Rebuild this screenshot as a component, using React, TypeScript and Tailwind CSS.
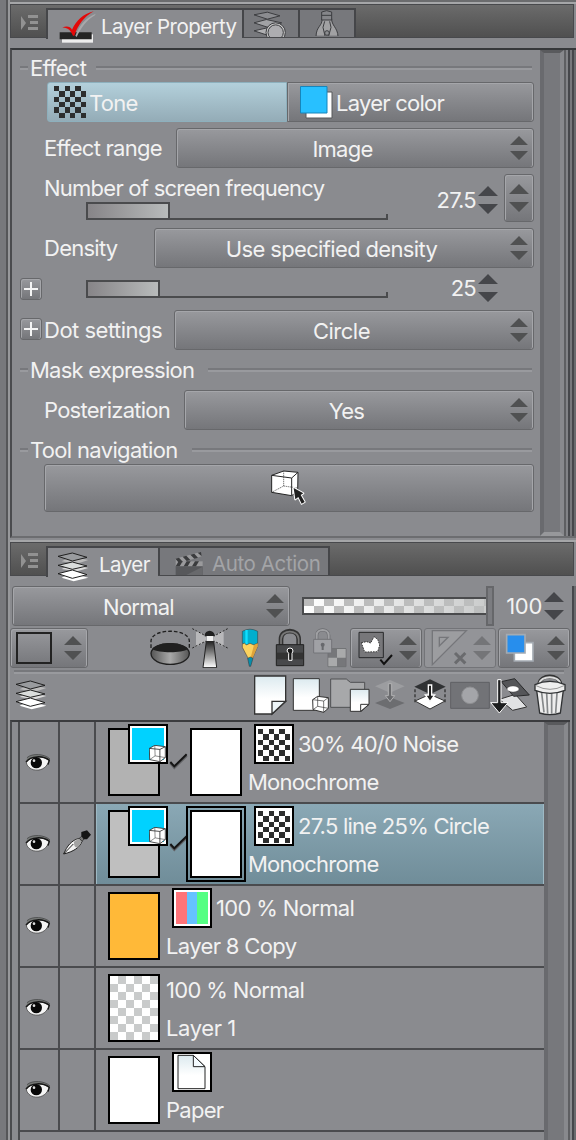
import React from 'react';
import { clsx } from 'clsx';

const buttonFace =
  'box-border border border-[#67686b] rounded-[3px] bg-linear-to-b from-[#98999d] to-[#75767a] shadow-[inset_1px_1px_0_#a5a6aa,inset_-1px_0_0_#a5a6aa]';

function Arrows({ large, className }: { large?: boolean; className?: string }) {
  if (large) {
    return (
      <svg className={clsx('shrink-0', className)} width="20" height="28" viewBox="0 0 20 28" fill="#45464a">
        <path d="M10 0 20 10H0ZM0 18H20L10 28Z" />
      </svg>
    );
  }
  return (
    <svg className={clsx('shrink-0', className)} width="18" height="24" viewBox="0 0 18 24" fill="#505152">
      <path d="M9 0 18 9H0ZM0 15H18L9 24Z" />
    </svg>
  );
}

function Select({ label, className, textClass }: { label: string; className: string; textClass?: string }) {
  return (
    <button className={clsx(buttonFace, 'flex h-10 shrink-0 items-center pr-[5px]', className)}>
      <span className={clsx('flex-1 pt-px pr-0.5 text-center', textClass)}>{label}</span>
      <Arrows />
    </button>
  );
}

function Heading({ label, className, textClass }: { label: string; className?: string; textClass: string }) {
  return (
    <div className={clsx('flex h-7 items-center', className)}>
      <div className="mr-0.5 h-1 w-2 border-t-2 border-b-2 border-t-[#77787c] border-b-[#999a9e]" />
      <span className={clsx('shrink-0', textClass)}>{label}</span>
      <div className="mr-2 h-1 flex-1 border-t-2 border-b-2 border-t-[#77787c] border-b-[#999a9e]" />
    </div>
  );
}

function PlusBox() {
  return (
    <button className={clsx(buttonFace, 'flex h-[22px] w-[22px] shrink-0 items-center justify-center')}>
      <svg width="14" height="14" viewBox="0 0 14 14" stroke="#f4f4f4" strokeWidth="2">
        <path d="M7 0V14M0 7H14" />
      </svg>
    </button>
  );
}

function Slider({ fill }: { fill: number }) {
  return (
    <div className="flex h-[18px] w-[302px] items-end">
      <div
        className="box-border h-[18px] shrink-0 border-2 border-[#4a4b4d] bg-linear-to-r from-[#878588] to-[#b8bbbb]"
        style={{ width: fill }}
      />
      <div className="h-1.5 flex-1 border-r-2 border-b-2 border-[#4a4b4d]" />
    </div>
  );
}

function MenuIcon() {
  return (
    <svg width="17" height="16" viewBox="0 0 17 16" fill="#929292">
      <path d="M0 1 5 8 0 15ZM7 0H17V3H7ZM9 6H17V9H9ZM7 12H17V15H7Z" />
    </svg>
  );
}

function Checker() {
  const cells: React.ReactNode[] = [];
  for (let r = 0; r < 6; r++) {
    for (let c = 0; c < 6; c++) {
      if ((r + c) % 2 === 0) cells.push(<rect key={`${r}-${c}`} x={c * 5.33} y={r * 5.33} width="5.33" height="5.33" />);
    }
  }
  return (
    <svg width="32" height="32" viewBox="0 0 32 32" fill="#2d2e2e" shapeRendering="crispEdges">
      {cells}
    </svg>
  );
}

function Cube({ className, size = 17 }: { className?: string; size?: number }) {
  return (
    <svg className={className} width={size} height={size} viewBox="0 0 50 50" fill="none" stroke="#303030" strokeWidth="2.5">
      <path d="M1 10 17 1 48 5V37L32 49 2 43Z" fill="#fff" />
      <path d="M1 10 32 13 48 5M32 13V49" />
      <path d="M17 1 18 32 2 43M18 32 48 37" strokeWidth="1.6" />
    </svg>
  );
}

function StackIcon() {
  return (
    <svg width="32" height="30" viewBox="0 0 96 90">
      <path d="M42 14 94 24 60 35 14 28Z" fill="#bbb" />
      <path d="M3 13 46 3 90 16 46 27Z" fill="#999b9e" stroke="#202020" strokeWidth="3" />
      <path d="M42 37 94 48 60 58 14 51Z" fill="#ddd" />
      <path d="M3 40 46 30 90 42 46 52Z" fill="#dadddc" stroke="#202020" strokeWidth="3" />
      <path d="M42 63 94 77 50 88 14 77Z" fill="#fff" />
      <path d="M3 65 46 54 90 68 46 79Z" fill="#fff" stroke="#202020" strokeWidth="3" />
    </svg>
  );
}

function RedCheckIcon() {
  return (
    <svg width="38" height="34" viewBox="170 32 114 102">
      <path d="M182 105H275V130H182Z" fill="#eee" />
      <path d="M175 99H271V120H175Z" fill="#242424" />
      <path d="M222 109C236 75 252 57 283 43L281 48C255 63 241 83 226 113Z" fill="#a8a8aa" />
      <path d="M183 85C194 79 207 80 212 91C225 64 245 44 277 36C248 53 231 75 219 109H215C206 89 198 84 183 85Z" fill="#e40808" />
    </svg>
  );
}

function LayerSearchIcon() {
  return (
    <svg width="34" height="27" viewBox="760 30 102 78" stroke="#3c3d40" strokeWidth="3">
      <path d="M763 91 803 82 837 92 803 104Z" fill="#b0b0b2" />
      <path d="M763 67 800 57 846 67 803 80Z" fill="#a1a2a5" />
      <path d="M763 43 803 35 841 46 803 56Z" fill="#8b8c90" />
      <circle cx="828" cy="96" r="29" fill="#c9c9c9" />
      <circle cx="828" cy="96" r="23" fill="#adadb0" />
    </svg>
  );
}

function BulbIcon() {
  return (
    <svg width="24" height="26" viewBox="950 30 72 78" fill="#a1a1a3" stroke="#3c3d40" strokeWidth="3">
      <path d="M971 56C973 78 954 78 953 109H1019C1018 83 999 76 1000 56Z" />
      <path d="M970 36Q985 28 1000 36V60H970Z" fill="#85868a" />
      <path d="M970 46H1000M980 108 974 82 979 64M991 108 998 82 994 64" fill="none" />
      <circle cx="986" cy="99" r="7" fill="#8c8d90" />
    </svg>
  );
}

function ClapIcon() {
  return (
    <svg width="30" height="24" viewBox="522 602 90 72">
      <path d="M526 625 601 605 605 618 530 642Z" fill="#9a9a9c" />
      <path d="M527 633H608V648H527Z" fill="#9a9a9c" />
      <path d="M527 648H608V676H527Z" fill="#57585b" />
      <path d="M526 625 537 622 549 635 538 639ZM548 619 559 616 571 629 560 632ZM571 613 583 610 594 622 583 625ZM593 607 603 605 605 618ZM536 633H548L539 648H527ZM560 633H572L563 648H551ZM585 633H597L588 648H576Z" fill="#3a3b3d" />
      <path d="M555 676 608 649V676Z" fill="#68696c" />
    </svg>
  );
}

function TabBar({ children }: { children: React.ReactNode }) {
  return (
    <div className="mr-0.5 box-border flex h-[34px] shrink-0 border border-[#48494c] bg-linear-to-b from-[#6b6b6b] to-[#505050] pt-[3px]">
      <div className="flex w-[35px] shrink-0 justify-center pt-[7px] pl-0.5">
        <MenuIcon />
      </div>
      {children}
    </div>
  );
}

const activeTab =
  'box-border flex h-[31px] shrink-0 border-t-2 border-l-2 border-[#454649] bg-[#8a8b8f] text-[20.5px] tracking-[-0.55px] shadow-[0_1px_0_#8a8b8f]';
const idleTab =
  'box-border flex h-[29px] shrink-0 overflow-hidden border-2 border-b-0 border-[#454649] bg-[#77787c] text-[20.5px] tracking-[-0.4px]';

function ScrollTrack({ className, closed }: { className?: string; closed?: boolean }) {
  return (
    <div
      className={clsx(
        'box-border shrink-0 border-t-[3px] border-r-[4px] border-l-[4px] border-t-[#595a5d] border-r-[#88898d] border-l-[#696a6e] bg-[#77787c]',
        closed && 'border-b-[4px] border-b-[#97989b]',
        className
      )}
    />
  );
}

function PropertyPanel() {
  return (
    <section className="flex h-[540px] flex-col">
      <div className="h-1 shrink-0 border-b-2 border-[#a5a6a8] bg-[#6b6c6e]" />
      <TabBar>
        <div className={clsx(activeTab, 'w-[196px] pl-2.5')}>
          <RedCheckIcon />
          <span className="ml-[5px] pt-[3px]">Layer Property</span>
        </div>
        <div className={clsx(idleTab, 'w-[56px] border-r-0 pl-[9px]')}>
          <LayerSearchIcon />
        </div>
        <div className={clsx(idleTab, 'w-[58px] justify-center')}>
          <BulbIcon />
        </div>
      </TabBar>
      <div className="mt-2.5 box-border flex h-[490px] border-t-2 border-b-2 border-l-2 border-[#4a4b4e] border-t-[#36383a] border-b-[#6c6d70]">
        <div className="flex w-[528px] flex-col pl-2">
          <Heading label="Effect" className="mt-1" textClass="w-[66px]" />
          <div className="ml-[27px] flex h-10">
            <button className="box-border flex w-[240px] shrink-0 items-center rounded-l-[3px] border border-[#8db0bd] bg-linear-to-b from-[#b3d0db] to-[#94acb7] pl-[6px]">
              <Checker />
              <span className="pt-px pl-[3px]">Tone</span>
            </button>
            <button className={clsx(buttonFace, 'flex w-[247px] shrink-0 items-center rounded-l-none pl-3')}>
              <svg width="33" height="33" viewBox="0 0 33 33">
                <path d="M6 6H32V32H6Z" fill="#fff" stroke="#56585a" />
                <path d="M.5.5H27V27H.5Z" fill="#28c0ff" stroke="#1685bb" />
              </svg>
              <span className="pt-px pl-[3px]">Layer color</span>
            </button>
          </div>
          <div className="mt-1.5 flex items-center pl-6">
            <span className="w-[132px] shrink-0">Effect range</span>
            <Select label="Image" className="w-[358px]" />
          </div>
          <div className="mt-1.5 flex h-12 pl-6">
            <div className="w-[390px]">
              <div className="h-7 leading-7">Number of screen frequency</div>
              <div className="ml-[42px]">
                <Slider fill={84} />
              </div>
            </div>
            <div className="flex w-[42px] items-center justify-end pt-1">27.5</div>
            <Arrows large className="mt-3 ml-[2px]" />
            <button className={clsx(buttonFace, 'ml-1.5 flex h-12 w-[30px] items-center justify-center')}>
              <Arrows large className="fill-[#505152]" />
            </button>
          </div>
          <div className="mt-1.5 flex items-center pl-6">
            <span className="w-[110px] shrink-0">Density</span>
            <Select label="Use specified density" className="w-[380px]" textClass="tracking-[-0.65px]" />
          </div>
          <div className="mt-1.5 flex h-[28px] items-start">
            <div className="mt-1">
              <PlusBox />
            </div>
            <div className="mt-1.5 ml-11">
              <Slider fill={74} />
            </div>
            <span className="w-[88px] text-right leading-[28px]">25</span>
            <Arrows large className="ml-[2px]" />
          </div>
          <div className="mt-2 flex items-center">
            <div className="-mt-0.5">
              <PlusBox />
            </div>
            <span className="ml-0.5 w-[130px] shrink-0 tracking-[-0.5px]">Dot settings</span>
            <Select label="Circle" className="w-[360px]" textClass="tracking-[-0.5px]" />
          </div>
          <Heading label="Mask expression" className="mt-1.5" textClass="w-[178px]" />
          <div className="mt-1.5 flex items-center pl-6">
            <span className="w-[140px] shrink-0">Posterization</span>
            <Select label="Yes" className="w-[350px]" />
          </div>
          <Heading label="Tool navigation" className="mt-1.5" textClass="w-[162px] tracking-[-0.67px]" />
          <button className={clsx(buttonFace, 'ml-6 flex h-12 w-[490px] items-start pt-[5px] pl-[225px]')}>
            <svg width="38" height="38" viewBox="808 363 114 114" fill="none" stroke="#242424" strokeWidth="3">
              <path d="M813 379 849 366 892 370 891 427 873 440 813 430Z" fill="#fff" />
              <path d="M813 379 873 387 892 370M873 387V440" />
              <path d="M849 366V411L813 430M849 411 891 417" strokeWidth="1.8" strokeDasharray="4 2" />
              <path d="M879 417 908 433 900 438 912 459 903 464 893 444 884 451Z" fill="#202020" stroke="#fff" strokeWidth="6" strokeLinejoin="round" />
              <path d="M879 417 908 433 900 438 912 459 903 464 893 444 884 451Z" fill="#202020" stroke="none" />
            </svg>
          </button>
        </div>
        <ScrollTrack className="h-[486px] w-6" closed />
        <div className="h-full w-0.5 bg-[#5e5f62]" />
        <div className="h-full w-2.5 bg-[linear-gradient(to_right,#828387_2px,#46474b_2px,#46474b_4px,#77787c_4px,#77787c_6px,#46474b_6px,#46474b_8px,#6a6b6e_8px)]" />
      </div>
    </section>
  );
}

function BlendRow() {
  return (
    <div className="flex h-10 items-center pl-0.5">
      <Select label="Normal" className="w-[278px]" />
      <div className="ml-3 box-border h-[18px] w-[184px] shrink-0 border-2 border-r-0 border-[#4a4b4d] bg-[linear-gradient(to_right,transparent,#bdbfbfcc),conic-gradient(#fff_25%,#bbb_0_50%,#fff_0_75%,#bbb_0)] bg-size-[100%_100%,20px_14px]" />
      <div className="box-border h-10 w-2 shrink-0 border-2 border-[#66676a] bg-[#7b7c80]" />
      <span className="w-[48px] shrink-0 text-right tracking-[-0.3px]">100</span>
      <Arrows large className="ml-0.5" />
    </div>
  );
}

function ModeRow() {
  return (
    <div className="mt-0.5 flex h-10 items-start">
      <button className={clsx(buttonFace, 'flex h-10 w-[78px] shrink-0 items-center pl-[5px]')}>
        <div className="box-border h-8 w-9 border-2 border-[#222]" />
        <Arrows className="ml-3" />
      </button>
      <svg className="ml-[61px] shrink-0" width="42" height="40" viewBox="447 144 126 120">
        <defs>
          <linearGradient id="rim">
            <stop stopColor="#555" />
            <stop offset="0.5" stopColor="#a9a9a9" />
            <stop offset="1" stopColor="#555" />
          </linearGradient>
        </defs>
        <path d="M453 220C455 181 566 181 568 220C567 264 454 264 453 220Z" fill="url(#rim)" stroke="#202020" strokeWidth="4" />
        <path d="M456 207C478 183 542 183 564 207C545 220 477 220 456 207Z" fill="#202020" />
        <path d="M453 204V183C455 144 566 144 568 183V204" fill="none" stroke="#202020" strokeWidth="4" strokeDasharray="11 6" />
      </svg>
      <svg className="shrink-0" width="38" height="40" viewBox="573 144 114 120">
        <defs>
          <linearGradient id="tower" x2="0" y2="1">
            <stop stopColor="#222" />
            <stop offset="1" stopColor="#fff" />
          </linearGradient>
        </defs>
        <path d="M588 151 618 168V183L588 201ZM671 151 642 168V183L671 201Z" fill="#b8b8ba" />
        <path d="M577 146 618 168M577 204 618 183M683 146 642 168M683 204 642 183" stroke="#252525" strokeWidth="3" strokeDasharray="6 5" />
        <path d="M619 184H641L650 263H609Z" fill="url(#tower)" stroke="#222" strokeWidth="3" />
        <path d="M614 165Q616 153 629 152Q641 153 644 165V169H614Z" fill="#202020" />
        <path d="M620 168H640V183H620Z" fill="#eee" />
      </svg>
      <svg className="ml-3 shrink-0" width="18" height="40" viewBox="723 144 54 120" stroke="#333" strokeWidth="1.5">
        <path d="M727 154Q750 141 773 154V190L752 200 727 190Z" fill="#00aece" />
        <path d="M736 150H743V193H736Z" fill="#10e0ff" stroke="none" />
        <path d="M727 193 733 189 739 195 750 190 762 195 773 190V199L757 236H745L727 202Z" fill="#fbd25f" />
        <path d="M762 195 773 190V199L757 236H751Z" fill="#dfa43a" stroke="none" />
        <path d="M743 235 751 231 759 235 752 259H748Z" fill="#078eac" />
      </svg>
      <svg className="ml-4 shrink-0" width="30" height="40" viewBox="825 144 90 120">
        <path d="M843 196V178C843 145 896 145 896 178V196" fill="none" stroke="#333" strokeWidth="14" />
        <path d="M843 194V178C843 147 896 147 896 178V194" fill="none" stroke="#777" strokeWidth="5" />
        <path d="M829 194H911V257H829Z" fill="#48494b" stroke="#222" strokeWidth="3" />
        <path d="M831 218H909V238H831Z" fill="#333" />
        <path d="M861 213A9 9 0 1 1 879 213L876 220V241H866V220Z" fill="#151515" stroke="#fff" strokeWidth="3" />
      </svg>
      <svg className="ml-[7px] shrink-0" width="36" height="40" viewBox="66 144 108 120">
        <path d="M80 180V166C80 144 116 144 116 166V180" fill="none" stroke="#6b6c70" strokeWidth="10" />
        <path d="M80 180V166C80 145 116 145 116 166V180" fill="none" stroke="#a0a1a4" strokeWidth="6" />
        <path d="M114 206H168V260H114Z" fill="#76777a" stroke="#707174" strokeWidth="3" />
        <path d="M141 207H167V233H141ZM115 233H141V259H115Z" fill="#a9aaab" />
        <path d="M71 178H125V219H71Z" fill="#a0a1a5" stroke="#737478" strokeWidth="3" />
        <circle cx="98" cy="194" r="6" fill="#68696d" />
        <path d="M95 194H101V210H95Z" fill="#68696d" />
      </svg>
      <button className={clsx(buttonFace, 'ml-0.5 flex h-10 w-[72px] shrink-0 items-center')}>
        <svg className="shrink-0" width="44" height="38" viewBox="184 147 132 114">
          <path d="M208 157H281V233H208Z" fill="#77777a" stroke="#27282a" strokeWidth="3" />
          <path d="M215 188 231 185 243 189 253 170 264 178 270 195 264 215 225 216Z" fill="#fff" stroke="#222" strokeWidth="2.5" strokeDasharray="5 3" />
          <path d="M272 239 283 252 307 225" fill="none" stroke="#111" strokeWidth="6" />
        </svg>
        <Arrows className="ml-1" />
      </button>
      <button className="ml-0.5 box-border flex h-10 w-[72px] shrink-0 items-center rounded-[3px] border border-[#737478] bg-[#939498]">
        <svg className="shrink-0" width="44" height="38" viewBox="406 147 132 114" fill="none" stroke="#75767a" strokeWidth="4">
          <path d="M428 152H530L428 254Z" fill="#9c9da0" />
          <path d="M449 172H475L449 198Z" />
          <path d="M496 219 527 250M527 219 496 250" strokeWidth="9" stroke="#6a6b6e" />
        </svg>
        <Arrows className="ml-1 opacity-45" />
      </button>
      <button className={clsx(buttonFace, 'ml-0.5 flex h-10 w-[72px] shrink-0 items-center')}>
        <svg className="shrink-0" width="44" height="38" viewBox="628 147 132 114" stroke="#a4abb2" strokeWidth="5">
          <path d="M674 188H730V243H674Z" fill="#fff" />
          <path d="M651 164H706V219H651Z" fill="#278eed" />
        </svg>
        <Arrows className="ml-1" />
      </button>
    </div>
  );
}

function CommandRow() {
  return (
    <div className="flex h-[46px] items-start pl-[5px]">
      <div className="mt-1.5">
        <StackIcon />
      </div>
      <svg className="ml-[206px] shrink-0" width="36" height="42" viewBox="759 279 108 126">
        <defs>
          <linearGradient id="sheet" x2="0" y2="1">
            <stop stopColor="#dceaef" />
            <stop offset="0.6" stopColor="#fff" />
          </linearGradient>
        </defs>
        <path d="M764 285H857V361L816 399H764Z" fill="url(#sheet)" stroke="#333" strokeWidth="4" />
        <path d="M857 361H816V399Z" fill="#eef6f9" stroke="#333" strokeWidth="4" />
      </svg>
      <svg className="ml-[3px] shrink-0" width="38" height="42" viewBox="6 279 114 126" stroke="#333" strokeWidth="3">
        <path d="M10 293H88V388H10Z" fill="url(#sheet)" />
        <path d="M68 356 83 346 115 350V382L101 394 69 386Z" fill="#fff" />
        <path d="M68 356 101 360 115 350M101 360V394M83 346V376L69 386M83 376 115 382" fill="none" strokeWidth="2" />
      </svg>
      <svg className="shrink-0" width="40" height="42" viewBox="120 279 120 126" stroke="#333" strokeWidth="3">
        <path d="M122 294H169L181 304H224V379H122Z" fill="#a7a8aa" stroke="#505153" />
        <path d="M181 325H237V370L214 391H181Z" fill="url(#sheet)" />
        <path d="M237 370H212V391Z" fill="#fff" />
      </svg>
      <svg className="ml-1 shrink-0" width="32" height="42" viewBox="252 279 96 126">
        <path d="M255 366 300 349 344 366 300 384Z" fill="#6c6d70" />
        <path d="M255 316 300 297 344 316 300 335Z" fill="#9c9da0" />
        <path d="M295 308H305V344H314L300 362 286 344H295Z" fill="#6a6b6e" stroke="#b2b2b4" strokeWidth="3" />
      </svg>
      <svg className="ml-[6px] shrink-0" width="36" height="42" viewBox="366 279 108 126">
        <path d="M375 325V364M465 325V364" stroke="#333" strokeWidth="4" strokeDasharray="9 6" />
        <path d="M375 360 420 340 465 360 420 384Z" fill="#fff" stroke="#333" strokeWidth="3" />
        <path d="M373 317 420 295 467 317 420 340Z" fill="#303234" />
        <path d="M415 312H425V342H434L420 362 406 342H415Z" fill="#222" stroke="#fff" strokeWidth="4" />
      </svg>
      <svg className="ml-0.5 shrink-0" width="40" height="42" viewBox="480 279 120 126">
        <path d="M482 304H598V382H482Z" fill="#727377" stroke="#606164" strokeWidth="3" />
        <circle cx="540" cy="343" r="25" fill="#a4a5a9" stroke="#8e8f92" strokeWidth="3" />
      </svg>
      <svg className="shrink-0" width="40" height="42" viewBox="600 279 120 126">
        <path d="M628 355 676 340 710 378 668 388Z" fill="#e1e2e3" stroke="#333" strokeWidth="3" />
        <path d="M634 302 674 293 718 342 671 346Z" fill="#555659" stroke="#292a2b" strokeWidth="3" />
        <ellipse cx="669" cy="324" rx="18" ry="9" fill="#fff" stroke="#333" />
        <path d="M623 296H633V365H654L628 396 602 365H623Z" fill="#1c1d1e" stroke="#fff" strokeWidth="3" />
      </svg>
      <svg className="ml-[3px] shrink-0" width="34" height="42" viewBox="730 279 102 126">
        <path d="M749 309C752 279 808 279 812 309" fill="none" stroke="#333" strokeWidth="12" />
        <path d="M749 309C752 282 808 282 812 309" fill="none" stroke="#ddd" strokeWidth="6" />
        <path d="M741 328 750 396Q781 406 812 396L821 328Z" fill="#eee" stroke="#303234" strokeWidth="4" />
        <path d="M756 336 763 394M771 336 774 398M786 336 786 398M802 336 798 396" stroke="#85888a" strokeWidth="5" />
        <path d="M736 311Q781 291 826 311V328Q781 346 736 328Z" fill="#eee" stroke="#303234" strokeWidth="4" />
        <path d="M739 314Q781 336 823 314" fill="none" stroke="#999" strokeWidth="3" />
      </svg>
    </div>
  );
}

function EyeIcon() {
  return (
    <svg width="26" height="18" viewBox="77 114 78 54">
      <path d="M81 143C91 122 131 120 149 137C138 176 87 172 81 143Z" fill="#f4f4f4" stroke="#444" strokeWidth="2.5" />
      <path d="M83 128C98 114 136 116 152 132L149 137C131 120 94 122 81 141Z" fill="#777a78" />
      <path d="M80 141C94 121 132 121 150 136L146 149" fill="none" stroke="#171717" strokeWidth="4" />
      <path d="M83 128C98 114 136 116 152 132" fill="none" stroke="#48494b" strokeWidth="2.5" />
      <circle cx="111" cy="143" r="17" fill="#080808" />
      <circle cx="104" cy="137" r="4" fill="#ddd" />
    </svg>
  );
}

function PenIcon() {
  return (
    <svg width="28" height="25" viewBox="191 344 84 75">
      <path d="M193 416C203 392 217 374 240 369L248 378C241 397 222 409 193 416Z" fill="#f2f2f2" stroke="#222" strokeWidth="3" />
      <path d="M224 379 240 369 248 378 236 396Q223 399 224 379Z" fill="#a2a2a2" />
      <path d="M193 416 222 386" stroke="#222" strokeWidth="3" />
      <path d="M240 369 248 362 255 370 248 378Z" fill="#777" stroke="#222" strokeWidth="2" />
      <path d="M246 350 263 345 275 358 263 372H253L246 362Z" fill="#151515" />
    </svg>
  );
}

function Thumb({ className }: { className?: string }) {
  return <div className={clsx('mt-1.5 box-border h-[68px] w-[52px] shrink-0 border-2 border-black', className)} />;
}

const badge = 'box-border h-10 w-10 shrink-0 border-2 border-black bg-white';

function MaskedLayer({ title, thumb, selected }: { title: string; thumb: string; selected?: boolean }) {
  return (
    <>
      <div className="relative">
        <Thumb className={thumb} />
        <div className={clsx(badge, 'absolute top-0.5 left-5 p-0.5')}>
          <div className="h-8 w-8 bg-[#00d2ff]" />
          <Cube className="absolute right-0 bottom-0" />
        </div>
      </div>
      <svg className="mt-[31px] ml-[9px] shrink-0" width="21" height="20" viewBox="507 117 63 60" fill="none">
        <path d="M511 147 523 161 560 125" stroke="#606164" strokeWidth="8" />
        <path d="M511 144 523 157 560 121" stroke="#151515" strokeWidth="6" />
      </svg>
      <Thumb className={clsx('bg-white', selected && 'outline-2 outline-offset-2 outline-black')} />
      <div className="flex flex-col pl-1.5">
        <div className="flex h-[42px] items-center pt-0.5 pl-1.5">
          <div className={clsx(badge, 'p-[3px] pl-0.5')}>
            <Checker />
          </div>
          <span className="ml-1">{title}</span>
        </div>
        <span className="mt-0.5 leading-8">Monochrome</span>
      </div>
    </>
  );
}

function LayerRow({ selected, children }: { selected?: boolean; children: React.ReactNode }) {
  return (
    <div className="group box-border flex h-[82px] shrink-0 border-b-2 border-[#4a4b4e]">
      <div className="flex w-[38px] shrink-0 items-center pb-[3px] pl-[5px] group-first:pb-0">
        <EyeIcon />
      </div>
      <div className="box-border flex w-[38px] shrink-0 items-center justify-end border-x-2 border-[#4a4b4e] pr-[3px] pb-[3px]">
        {selected && <PenIcon />}
      </div>
      <div
        className={clsx(
          'flex flex-1 pl-3',
          selected && 'bg-linear-to-b from-[#8aa8b5] to-[#708d99] shadow-[inset_1px_0_0_#9eb9c4,inset_-1px_0_0_#9eb9c4]'
        )}
      >
        {children}
      </div>
    </div>
  );
}

function LayerList() {
  return (
    <div className="box-border flex h-[420px] w-[560px] shrink-0 border-t-2 border-l-2 border-[#4a4b4e] border-t-[#3b3c3f]">
      <div className="ml-1.5 box-border flex w-[526px] shrink-0 flex-col border-l-2 border-[#4a4b4e]">
        <LayerRow>
          <MaskedLayer title="30% 40/0 Noise" thumb="bg-[#b2b2b2]" />
        </LayerRow>
        <LayerRow selected>
          <MaskedLayer title="27.5 line 25% Circle" thumb="bg-[#bfbfbf]" selected />
        </LayerRow>
        <LayerRow>
          <Thumb className="bg-[#ffb938]" />
          <div className="flex flex-col pl-1.5">
            <div className="flex h-[42px] items-center pt-0.5 pl-1.5">
              <div className={clsx(badge, 'flex p-0.5')}>
                <div className="w-[11px] bg-[#ff7479]" />
                <div className="w-[11px] bg-[#65c2ff]" />
                <div className="w-[11px] bg-[#54ff83]" />
              </div>
              <span className="ml-1 tracking-[-0.65px]">100 % Normal</span>
            </div>
            <span className="mt-0.5 leading-8 tracking-[-0.65px]">Layer 8 Copy</span>
          </div>
        </LayerRow>
        <LayerRow>
          <Thumb className="bg-[conic-gradient(#c9cbcb_25%,#fff_0_50%,#c9cbcb_0_75%,#fff_0)] bg-size-[16px_16px]" />
          <div className="flex flex-col pl-1.5">
            <span className="h-[42px] leading-[44px] tracking-[-0.65px]">100 % Normal</span>
            <span className="mt-0.5 leading-8 tracking-[-0.4px]">Layer 1</span>
          </div>
        </LayerRow>
        <LayerRow>
          <Thumb className="bg-white" />
          <div className="flex flex-col pl-1.5">
            <div className="flex h-[42px] items-center pt-0.5 pl-1.5">
              <div className={clsx(badge, 'flex justify-center')}>
                <svg width="30" height="36" viewBox="532 528 90 108" stroke="#242424" strokeWidth="3">
                  <path d="M535 532H581L616 566V632H535Z" fill="url(#sheet)" />
                  <path d="M581 532V566H616Z" fill="#f4fbff" />
                </svg>
              </div>
            </div>
            <span className="mt-0.5 leading-8">Paper</span>
          </div>
        </LayerRow>
      </div>
      <ScrollTrack className="h-[418px] w-6" />
      <div className="h-[418px] w-0.5 bg-[#5e5f62]" />
    </div>
  );
}

function LayerPanel() {
  return (
    <section className="flex h-[600px] flex-col">
      <div className="h-0.5 shrink-0 bg-[#a5a6a8]" />
      <TabBar>
        <div className={clsx(activeTab, 'w-[112px] pt-1 pl-[9px]')}>
          <StackIcon />
          <span className="ml-[10px] -mt-px">Layer</span>
        </div>
        <div className={clsx(idleTab, 'w-[172px] pt-[3px] pl-3.5')}>
          <ClapIcon />
          <span className="ml-[8px] -mt-px text-[#a3a4a7]">Auto Action</span>
        </div>
      </TabBar>
      <div className="mt-2.5 flex">
        <div className="flex w-[562px] shrink-0 flex-col">
          <BlendRow />
          <ModeRow />
          <div className="mt-0.5 mr-2 ml-1 h-1 shrink-0 border-t-2 border-b-2 border-t-[#77787c] border-b-[#999a9e]" />
          <CommandRow />
          <LayerList />
        </div>
        <div className="w-1 shrink-0 border-r-2 border-l-2 border-l-[#46474b] border-r-[#6a6b6e]" />
      </div>
    </section>
  );
}

export default function App() {
  return (
    <div className="flex h-[1140px] w-[576px] overflow-hidden bg-[#8a8b8f] font-['Inter',sans-serif] text-[22px] leading-7 tracking-[-0.75px] whitespace-nowrap text-[#f2f2f2]">
      <div className="box-border w-2.5 shrink-0 border-r-2 border-[#97989b] bg-[linear-gradient(to_right,#77787c_6px,#555659_6px)]" />
      <main className="w-[566px] shrink-0">
        <PropertyPanel />
        <LayerPanel />
      </main>
    </div>
  );
}
